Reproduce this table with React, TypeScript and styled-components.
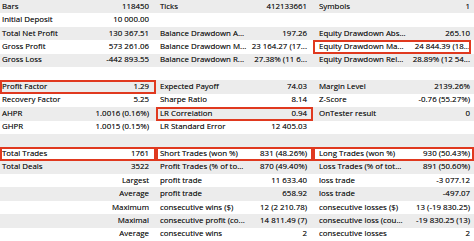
import React from "react";
import styled, { createGlobalStyle } from "styled-components";

const Global = createGlobalStyle`
  html, body { margin: 0; padding: 0; background: #ffffff; }
  body { font-family: "Open Sans", "Noto Sans", "DejaVu Sans", sans-serif; }
`;

const Sheet = styled.div`
  width: 474px;
  height: 241px;
  display: grid;
  grid-template-rows: repeat(18, 1fr);
  overflow: hidden;
  color: #1c1c1c;
  font-size: 7.9px;
`;

const Row = styled.div<{ $shade: boolean }>`
  display: grid;
  grid-template-columns: 156px 157px 161px;
  background: ${(p) => (p.$shade ? "#ececec" : "#ffffff")};
  min-height: 0;
`;

const Cell = styled.div<{ $marked?: boolean; $pl: number; $pr: number; $end?: boolean; $tail?: boolean }>`
  display: flex;
  align-items: center;
  justify-content: ${(p) => (p.$end ? "flex-end" : "space-between")};
  padding: 0 ${(p) => p.$pr}px 0 ${(p) => p.$pl}px;
  margin-right: ${(p) => (p.$tail ? 3 : 0)}px;
  white-space: nowrap;
  overflow: hidden;
  outline: ${(p) => (p.$marked ? "2px solid #e0391f" : "none")};
  outline-offset: -2px;
  line-height: 1;
  text-shadow: 0 0 0.2px rgba(0, 0, 0, 0.6);
`;

const Label = styled.span``;
const Value = styled.span``;

type C = { l?: string; v?: string; m?: boolean; end?: boolean; tail?: boolean };
const rows: C[][] = [
  [{ l: "Bars", v: "118450" }, { l: "Ticks", v: "412133661" }, { l: "Symbols", v: "1" }],
  [{ l: "Initial Deposit", v: "10 000.00" }, {}, {}],
  [{ l: "Total Net Profit", v: "130 367.51" }, { l: "Balance Drawdown A...", v: "197.26" }, { l: "Equity Drawdown Abs...", v: "265.10" }],
  [{ l: "Gross Profit", v: "573 261.06" }, { l: "Balance Drawdown M...", v: "23 164.27 (17..." }, { l: "Equity Drawdown Ma...", v: "24 844.39 (18...", m: true, tail: true }],
  [{ l: "Gross Loss", v: "-442 893.55" }, { l: "Balance Drawdown R...", v: "27.38% (11 6..." }, { l: "Equity Drawdown Rel...", v: "28.89% (12 54..." }],
  [{}, {}, {}],
  [{ l: "Profit Factor", v: "1.29", m: true }, { l: "Expected Payoff", v: "74.03" }, { l: "Margin Level", v: "2139.26%" }],
  [{ l: "Recovery Factor", v: "5.25" }, { l: "Sharpe Ratio", v: "8.14" }, { l: "Z-Score", v: "-0.76 (55.27%)" }],
  [{ l: "AHPR", v: "1.0016 (0.16%)" }, { l: "LR Correlation", v: "0.94", m: true }, { l: "OnTester result", v: "0" }],
  [{ l: "GHPR", v: "1.0015 (0.15%)" }, { l: "LR Standard Error", v: "12 405.03" }, {}],
  [{}, {}, {}],
  [{ l: "Total Trades", v: "1761", m: true }, { l: "Short Trades (won %)", v: "831 (48.26%)", m: true }, { l: "Long Trades (won %)", v: "930 (50.43%)", m: true }],
  [{ l: "Total Deals", v: "3522" }, { l: "Profit Trades (% of to...", v: "870 (49.40%)" }, { l: "Loss Trades (% of tot...", v: "891 (50.60%)" }],
  [{ l: "Largest", end: true }, { l: "profit trade", v: "11 633.40" }, { l: "loss trade", v: "-3 077.12" }],
  [{ l: "Average", end: true }, { l: "profit trade", v: "658.92" }, { l: "loss trade", v: "-497.07" }],
  [{ l: "Maximum", end: true }, { l: "consecutive wins ($)", v: "12 (2 210.78)" }, { l: "consecutive losses ($)", v: "13 (-19 830.25)" }],
  [{ l: "Maximal", end: true }, { l: "consecutive profit (co...", v: "14 811.49 (7)" }, { l: "consecutive loss (cou...", v: "-19 830.25 (13)" }],
  [{ l: "Average", end: true }, { l: "consecutive wins", v: "2" }, { l: "consecutive losses", v: "2" }],
];

const pads: [number, number][] = [
  [2, 7],
  [4, 6],
  [6, 4],
];

export default function App() {
  return (
    <>
      <Global />
      <Sheet>
        {rows.map((r, i) => (
          <Row key={i} $shade={i % 2 === 0}>
            {r.map((c, j) => (
              <Cell
                key={j}
                $marked={c.m}
                $pl={pads[j][0]}
                $pr={c.tail ? 1 : pads[j][1]}
                $end={c.end}
                $tail={c.tail}
              >
                <Label>{c.l}</Label>
                {c.v !== undefined && <Value>{c.v}</Value>}
              </Cell>
            ))}
          </Row>
        ))}
      </Sheet>
    </>
  );
}
